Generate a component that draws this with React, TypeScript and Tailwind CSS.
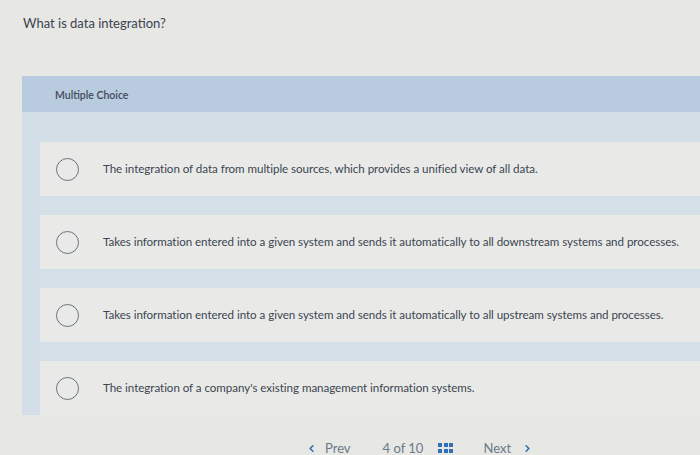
import React from 'react'
import { ChevronLeft, ChevronRight } from 'lucide-react'

const options = [
  'The integration of data from multiple sources, which provides a unified view of all data.',
  'Takes information entered into a given system and sends it automatically to all downstream systems and processes.',
  'Takes information entered into a given system and sends it automatically to all upstream systems and processes.',
  "The integration of a company's existing management information systems.",
]

function Radio() {
  return <span className="block h-[23px] w-[23px] shrink-0 rounded-full border-[1.5px] border-[#66737f]" />
}

export default function App() {
  return (
    <div
      className="h-[455px] w-[700px] overflow-hidden bg-[#e7e7e4] text-[#3a4350]"
      style={{ fontFamily: 'Lato, "Open Sans", Arial, sans-serif' }}
    >
      <div className="px-[23px] pt-[14px] text-[13px] leading-[18px]">What is data integration?</div>

      <div className="ml-[22px] mt-[44px]">
        <div className="flex h-[36px] items-center bg-[#b9cbdf] pl-[33px] pt-[4px] text-[10.5px] font-semibold text-[#3f4a5a]">
          Multiple Choice
        </div>
        <div className="border-l-[18px] border-[#d3dee8]">
          <div className="h-[30px] bg-[#d4dee7]" />
          {options.map((text, i) => (
            <div key={i}>
              <div className="flex h-[54px] items-center gap-[24px] bg-[#e9eae7] pl-[16px] text-[11.6px] tracking-[-0.05px] text-[#3c4552]">
                <Radio />
                <span>{text}</span>
              </div>
              {i < options.length - 1 && <div className="h-[19px] bg-[#d5dfe8]" />}
            </div>
          ))}
        </div>
      </div>

      <div className="mt-[26px] flex items-center pl-[306px] text-[13px] leading-[14px] text-[#6d7a88]">
        <span className="flex items-center gap-[8px]">
          <ChevronLeft size={11} strokeWidth={3.5} className="text-[#2f6fb3]" />
          Prev
        </span>
        <span className="ml-[32px]">4 of 10</span>
        <span className="ml-[15px] grid grid-cols-3 gap-[1.5px]">
          {Array.from({ length: 6 }).map((_, i) => (
            <span key={i} className="block h-[4px] w-[4px] bg-[#2f6fb3]" />
          ))}
        </span>
        <span className="ml-[30px] flex items-center gap-[11px]">
          Next
          <ChevronRight size={11} strokeWidth={3.5} className="text-[#2f6fb3]" />
        </span>
      </div>
    </div>
  )
}
